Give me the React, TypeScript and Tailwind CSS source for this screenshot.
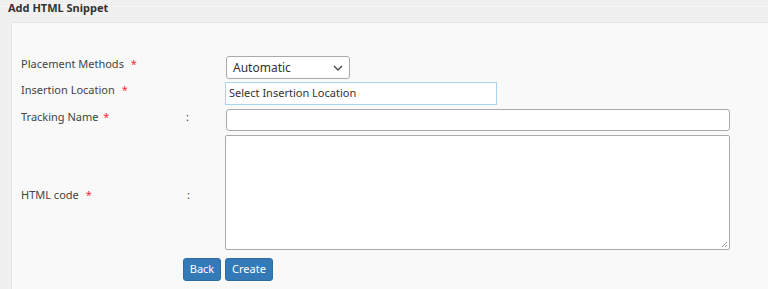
export default function App() {
  const font = { fontFamily: '"Noto Sans", "Open Sans", sans-serif' };

  return (
    <div className="relative w-[768px] h-[289px] overflow-hidden bg-[#f0f0f0] text-[#444]" style={font}>
      {/* header strip */}
      <div className="h-[6px]" />
      <div className="h-[16px] border-t border-[#f8f8f8]" />
      <h1 className="absolute left-[8px] top-[0px] text-[11px] font-bold text-[#333] leading-[16px]">
        Add HTML Snippet
      </h1>

      <div className="ml-[11px] border-l border-t border-[#e6e6e6] bg-[#f9f9f9] h-[267px] pl-[9px] pr-[38px] pt-[33px]">
        {/* Placement Methods */}
        <div className="flex items-start h-[22px]">
          <div className="w-[163px] text-[11px] leading-[14px] pt-[1px]">
            Placement Methods <span className="text-red-500 ml-[4px]">*</span>
          </div>
          <div className="w-[42px]" />
          <div className="w-[124px] h-[23px] border border-[#aaa] rounded-[3px] bg-white flex items-center justify-between pl-[6px] pr-[6px]">
            <span className="text-[12px] text-[#333]">Automatic</span>
            <svg width="10" height="6" viewBox="0 0 10 6" fill="none" stroke="#444" strokeWidth="1.3">
              <path d="M1 1l4 4 4-4" />
            </svg>
          </div>
        </div>

        {/* Insertion Location */}
        <div className="flex items-start h-[23px] mt-[4px]">
          <div className="w-[163px] text-[11px] leading-[14px] pt-[1px]">
            Insertion Location <span className="text-red-500 ml-[4px]">*</span>
          </div>
          <div className="w-[41px]" />
          <div className="w-[272px] h-[23px] border border-[#a9d3ef] bg-white flex items-center pl-[3px]">
            <span className="text-[11px] text-[#333]">Select Insertion Location</span>
          </div>
        </div>

        {/* Tracking Name */}
        <div className="flex items-start h-[22px] mt-[4px]">
          <div className="w-[163px] text-[11px] leading-[14px] pt-[1px]">
            Tracking Name <span className="text-red-500 ml-[2px]">*</span>
          </div>
          <div className="w-[42px] text-[11px] leading-[14px] pt-[1px] pl-[2px]">:</div>
          <div className="flex-1 h-[22px] border border-[#aaa] rounded-[3px] bg-white" />
        </div>

        {/* HTML code */}
        <div className="flex items-center h-[115px] mt-[4px]">
          <div className="w-[163px] text-[11px] leading-[14px] pt-[5px]">
            HTML code <span className="text-red-500 ml-[4px]">*</span>
          </div>
          <div className="w-[41px] text-[11px] leading-[14px] pt-[5px] pl-[3px]">:</div>
          <div className="flex-1 h-[115px] border border-[#aaa] rounded-[2px] bg-white relative">
            <svg className="absolute right-[1px] bottom-[1px]" width="7" height="7" viewBox="0 0 7 7" stroke="#999" strokeWidth="1">
              <path d="M1 6L6 1M4 6L6 4" />
            </svg>
          </div>
        </div>

        {/* buttons */}
        <div className="flex gap-[4px] mt-[8px] ml-[162px]">
          <button className="w-[38px] h-[23px] rounded-[3px] bg-[#337ab7] border border-[#2e6da4] text-white text-[11px]">
            Back
          </button>
          <button className="w-[48px] h-[23px] rounded-[3px] bg-[#337ab7] border border-[#2e6da4] text-white text-[11px]">
            Create
          </button>
        </div>
      </div>
    </div>
  );
}
